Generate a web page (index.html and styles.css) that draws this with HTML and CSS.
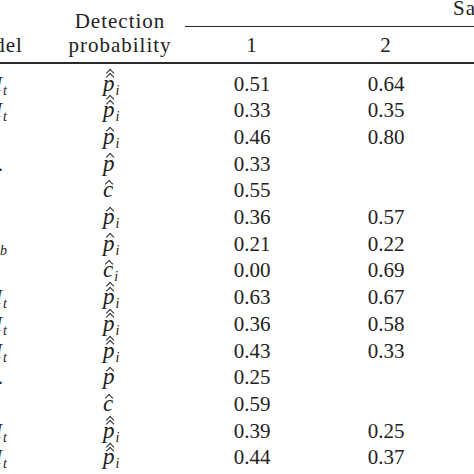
FILE: index.html
```html
<!DOCTYPE html>
<html>
<head>
<meta charset="utf-8">
<link rel="stylesheet" href="styles.css">
</head>
<body>
<div class="page">
<table class="tbl">
<colgroup>
<col class="c-model"><col class="c-det"><col class="c-s"><col class="c-s"><col class="c-s"><col class="c-s">
</colgroup>
<thead>
<tr>
<th class="hm" rowspan="2">Model</th>
<th class="hd" rowspan="2">Detection<br>probability</th>
<th class="hs" colspan="4">Sampling occasion</th>
</tr>
<tr>
<th class="hn">1</th><th class="hn">2</th><th class="hn">3</th><th class="hn">4</th>
</tr>
</thead>
<tbody>
<tr><td class="mod"><i>M</i><sub>t</sub></td><td class="det"><span class="hat dbl">p</span><sub>i</sub></td><td class="num">0.51</td><td class="num">0.64</td><td class="num"></td><td class="num"></td></tr>
<tr><td class="mod"><i>M</i><sub>t</sub></td><td class="det"><span class="hat dbl">p</span><sub>i</sub></td><td class="num">0.33</td><td class="num">0.35</td><td class="num"></td><td class="num"></td></tr>
<tr><td class="mod"></td><td class="det"><span class="hat">p</span><sub>i</sub></td><td class="num">0.46</td><td class="num">0.80</td><td class="num"></td><td class="num"></td></tr>
<tr><td class="mod dot"><i>M</i>.</td><td class="det"><span class="hat">p</span></td><td class="num">0.33</td><td class="num"></td><td class="num"></td><td class="num"></td></tr>
<tr><td class="mod"></td><td class="det"><span class="hat c">c</span></td><td class="num">0.55</td><td class="num"></td><td class="num"></td><td class="num"></td></tr>
<tr><td class="mod"></td><td class="det"><span class="hat">p</span><sub>i</sub></td><td class="num">0.36</td><td class="num">0.57</td><td class="num"></td><td class="num"></td></tr>
<tr><td class="mod"><i>M</i><sub>b</sub></td><td class="det"><span class="hat">p</span><sub>i</sub></td><td class="num">0.21</td><td class="num">0.22</td><td class="num"></td><td class="num"></td></tr>
<tr><td class="mod"></td><td class="det"><span class="hat c">c</span><sub>i</sub></td><td class="num">0.00</td><td class="num">0.69</td><td class="num"></td><td class="num"></td></tr>
<tr><td class="mod"><i>M</i><sub>t</sub></td><td class="det"><span class="hat dbl">p</span><sub>i</sub></td><td class="num">0.63</td><td class="num">0.67</td><td class="num"></td><td class="num"></td></tr>
<tr><td class="mod"><i>M</i><sub>t</sub></td><td class="det"><span class="hat dbl">p</span><sub>i</sub></td><td class="num">0.36</td><td class="num">0.58</td><td class="num"></td><td class="num"></td></tr>
<tr><td class="mod"><i>M</i><sub>t</sub></td><td class="det"><span class="hat dbl">p</span><sub>i</sub></td><td class="num">0.43</td><td class="num">0.33</td><td class="num"></td><td class="num"></td></tr>
<tr><td class="mod dot"><i>M</i>.</td><td class="det"><span class="hat">p</span></td><td class="num">0.25</td><td class="num"></td><td class="num"></td><td class="num"></td></tr>
<tr><td class="mod"></td><td class="det"><span class="hat c">c</span></td><td class="num">0.59</td><td class="num"></td><td class="num"></td><td class="num"></td></tr>
<tr><td class="mod"><i>M</i><sub>t</sub></td><td class="det"><span class="hat dbl">p</span><sub>i</sub></td><td class="num">0.39</td><td class="num">0.25</td><td class="num"></td><td class="num"></td></tr>
<tr><td class="mod"><i>M</i><sub>t</sub></td><td class="det"><span class="hat dbl">p</span><sub>i</sub></td><td class="num">0.44</td><td class="num">0.37</td><td class="num"></td><td class="num"></td></tr>
</tbody>
</table>
</div>
</body>
</html>
```

FILE: styles.css
```css
html, body {
  margin: 0;
  padding: 0;
  background: #ffffff;
  overflow: hidden;
  width: 474px;
  height: 474px;
}

.page {
  margin-left: -37px;
  color: #222222;
  font-family: "Liberation Serif", "Times New Roman", serif;
  font-size: 21px;
}

.tbl {
  border-collapse: separate;
  border-spacing: 0;
  table-layout: fixed;
  width: 758px;
}

.c-model { width: 60px; }
.c-det { width: 162px; }
.c-s { width: 134px; }

.tbl th {
  font-weight: normal;
  letter-spacing: 1px;
  padding: 0;
}

.hm, .hd {
  vertical-align: bottom;
  line-height: 24px;
  padding-bottom: 5px !important;
  border-bottom: 2px solid #2a2a2a;
  text-align: center;
}

.hd {
  padding-left: 32px !important;
}

.hs {
  text-align: left;
  vertical-align: top;
  line-height: 16px;
  padding: 0 0 10px 268px !important;
  border-bottom: 1px solid #2a2a2a;
}

.hn {
  text-align: center;
  vertical-align: bottom;
  line-height: 24px;
  padding: 6px 0 5px 0 !important;
  border-bottom: 2px solid #2a2a2a;
}

.tbl td {
  padding: 0;
  line-height: 26.7px;
  white-space: nowrap;
}

.tbl tbody tr:first-child td {
  padding-top: 6.5px;
}

.mod {
  text-align: right;
  padding-right: 16px !important;
}

.mod.dot {
  padding-right: 20px !important;
}

.num {
  text-align: center;
}

.det {
  text-align: left;
  padding-left: 80px !important;
}

sub {
  font-size: 14px;
  font-style: italic;
  vertical-align: -4px;
  line-height: 0;
  margin-left: 1px;
}

.hat {
  position: relative;
  display: inline-block;
  font-style: italic;
  font-size: 23px;
  line-height: 1;
}

.hat::before,
.dbl::after {
  content: "";
  position: absolute;
  left: 3.8px;
  top: 2.6px;
  width: 5.2px;
  height: 5.2px;
  border-left: 1.3px solid #2a2a2a;
  border-top: 1.3px solid #2a2a2a;
  transform: rotate(45deg);
}

.dbl::after {
  top: -1.8px;
}

.hat.c::before {
  left: 3.2px;
}
```
